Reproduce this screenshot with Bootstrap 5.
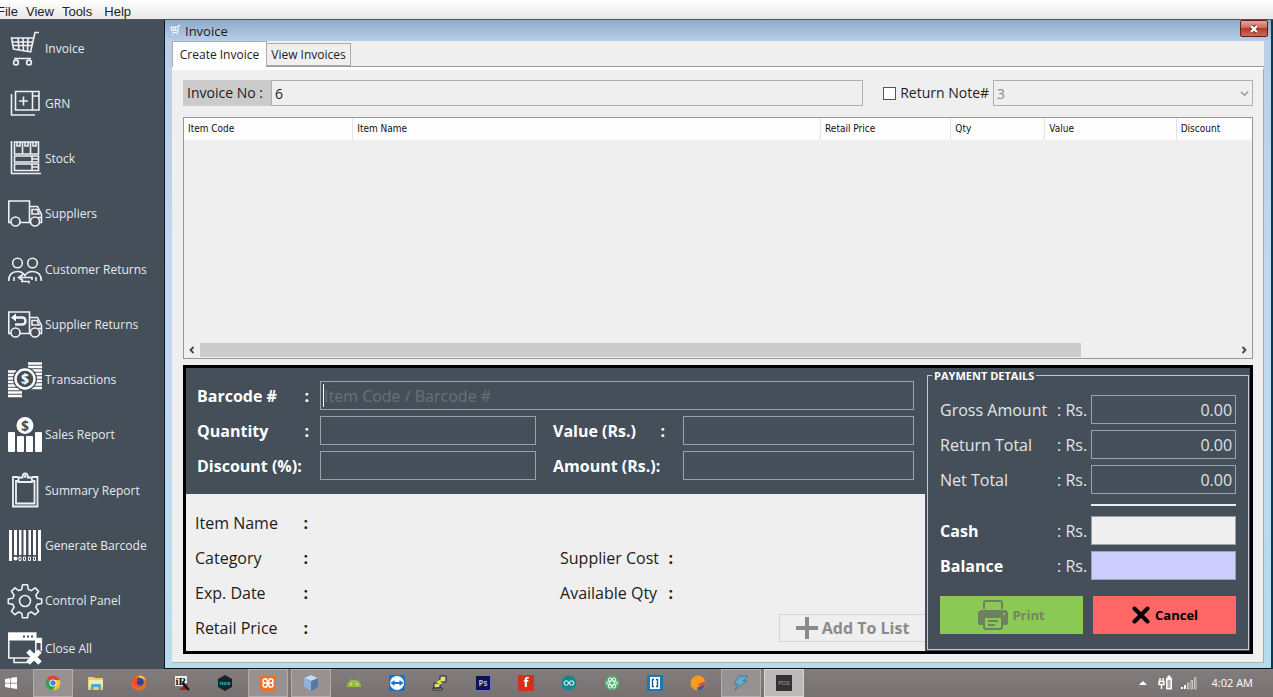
<!DOCTYPE html>
<html lang="en">
<head>
<meta charset="utf-8">
<meta name="viewport" content="width=device-width, initial-scale=1">
<title>Invoice</title>
<link href="https://cdn.jsdelivr.net/npm/bootstrap@5.3.0/dist/css/bootstrap.min.css" rel="stylesheet">
<style>
:root{--slate:#444f5a;--panel:#efefef;--line:#9aa2aa}
body{font-family:"Open Sans","Noto Sans",sans-serif;font-size:16px;line-height:20px;color:#1c1c1c;background:var(--slate)}
button,input,select{font-family:inherit}
.menubar{height:20px;background:linear-gradient(#fff,#e8e8e8);border-bottom:1px solid #4a5560;overflow:hidden}
.menubar ul{margin-left:-3px;gap:8px}
.menubar button{font:13px/19px "Liberation Sans",sans-serif;color:#222;background:none;border:0;padding:0}
.sidebar{width:165px;flex:none;border-right:1px solid #0d1922;padding-top:1px}
.sidebar li{flex:1 1 0;min-height:38px}
.sidebar li:last-child{flex:0 0 40px}
.sidebar a{color:#e6eaee;font-size:12px;padding-left:8px;gap:3px;height:100%;text-decoration:none;white-space:nowrap}
.sidebar svg{width:34px;height:34px;overflow:visible;fill:none;stroke:#eef1f4;stroke-width:1.6;flex:none}
.sidebar .solid{fill:#fff;stroke:none}
.frame{background:linear-gradient(#b9cfe8,#c4d8ef 280px,#b5dcec);padding:0 7px 5px;border-right:2px solid #0b3a52;border-bottom:1px solid #06141c}
.titlebar{height:21px;margin:0 -7px;padding:0 3px 0 5px;gap:4px;background:linear-gradient(#8fabc9,#b7cde8);font-size:13px}
.closer{width:28px;height:17px;border:1px solid #5d1f1f;border-radius:2px;background:linear-gradient(#e2a79c,#cf6a5b 45%,#b53a2b 50%,#d0685c);padding:0}
.client{background:var(--panel)}
.tabstrip{border-bottom:1px solid #9b9b9b;height:26px}
.tabstrip button{border:1px solid #acacac;font-size:12px;line-height:20px;color:#222;padding:0 4px;background:var(--panel);white-space:nowrap}
.tabstrip .on{width:95px;height:27px;background:#fff;border-bottom:0}
.tabstrip .off{width:84px;height:23px;border-left:0}
.page{border-right:1px solid #a8a8a8;border-bottom:1px solid #b5b5b5;border-top:3px solid #fff;padding:10px 10px 8px 11px}
.headrow{height:26px}
.headrow label{font-size:14px}
.tag{background:#cbcbcb;width:88px;padding-left:4px;line-height:26px}
.field{height:26px;border:1px solid #b0b0b0;border-radius:0;background:var(--panel);padding:0 3px;font-size:14px;color:#222}
.form-check-input.tick{width:13px;height:13px;border-radius:0;border:1px solid #555;margin:0 4px 0 20px}
.field.pick{width:260px;color:#888;background:var(--panel) url("data:image/svg+xml,%3Csvg xmlns='http://www.w3.org/2000/svg' viewBox='0 0 10 10'%3E%3Cpath d='M1 3l4 4 4-4' fill='none' stroke='%23999' stroke-width='1.5'/%3E%3C/svg%3E") no-repeat right 3px center/9px}
.gridbox{border:1px solid #979797;margin-top:11px;flex:1 1 auto;min-height:120px}
.gridbox table{table-layout:fixed;font:10px/22px "DejaVu Sans Condensed","DejaVu Sans",sans-serif;color:#111;margin:0}
.gridbox th{font-weight:400;background:#fdfdfd;border-right:1px solid #e3e3e3;padding:0 4px;white-space:nowrap}
.gridbox th:last-child{border-right:0}
.hbar{height:16px}
.hbar button{width:16px;border:0;background:none;padding:0;line-height:0}
.thumb{width:85%;background:#cbcbcb;height:14px;align-self:center}
.entry{border:3px solid #000;margin-top:6px;flex:none;height:289px}
.dark{background:var(--slate);color:#fff;height:126px;padding:13px 11px 0}
.formgrid{display:grid;grid-template-columns:123px minmax(0,216fr) 147px minmax(0,231fr);row-gap:6px;align-items:center}
.formgrid label{font-weight:700;display:flex;justify-content:space-between;width:112px;white-space:nowrap}
.formgrid .second{margin-left:17px}
.slot{height:29px;border:1px solid var(--line);border-radius:0;background:transparent;color:#dfe2e5;padding:0 3px;font-size:16px;width:100%}
.slot::placeholder{color:#6d7176;opacity:1}
.caret{position:relative;grid-column:2/5;height:29px;display:flex}
.caret::before{content:"";position:absolute;left:3px;top:3px;bottom:3px;width:1px;background:#fff}
.info{background:var(--panel);display:grid;grid-template-columns:minmax(0,365fr) minmax(0,365fr);grid-auto-rows:35px;align-items:center;padding:11px 0 0 9px}
.info dl{display:flex;justify-content:space-between;width:113px;margin:0;white-space:nowrap}
.info dt{font-weight:400}
.info dd{font-weight:700;margin:0}
.addbtn{width:146px;height:28px;border:1px solid #d6d6d6;border-right:0;background:var(--panel);color:#8b8b8b;font-weight:700;font-size:16px;padding:0;gap:4px}
.paybox{width:325px;flex:none;background:var(--slate);padding:0 1px 1px 2px}
.paybox fieldset{border:1px solid #c3c9ce;height:100%;padding:12px 12px 0;color:#e3e6e9}
.paybox legend{float:none;width:auto;font-size:11px;line-height:15px;font-weight:700;color:#fff;padding:0 2px;margin:0 0 0 -8px}
.payrow{display:grid;grid-template-columns:117px 34px minmax(0,1fr);height:29px;align-items:center;margin-bottom:6px;white-space:nowrap}
.payrow .slot{text-align:right}
.payline{margin:10px 0 10px 151px;border-top:2px solid #e9ecee;opacity:1}
.action{height:38px;border:0;border-radius:0;font-weight:700;font-size:13px;color:#000;padding:0;gap:4px;flex:1 1 0}
.taskbar{height:28px;background:linear-gradient(#827c7c,#777171);flex:none}
.taskbar button{width:40px;height:28px;border:1px solid transparent;background:none;padding:0;line-height:0;flex:none}
.taskbar .home{width:22px;margin-right:11px}
.taskbar .open{background:#979191;border-color:#b3adad}
.taskbar .front{background:#bdb9b9;border-color:#d9d6d6}
.taskbar svg{width:16px;height:16px}
.tray{color:#fff;font-size:11px;line-height:28px;padding-right:20px;gap:7px}
</style>
</head>
<body class="d-flex flex-column min-vh-100">
<header class="menubar flex-shrink-0">
 <ul class="list-unstyled d-flex mb-0">
  <li><button>File</button></li><li><button>View</button></li><li><button>Tools</button></li><li class="ms-1"><button>Help</button></li>
 </ul>
</header>
<div class="d-flex flex-grow-1">
<nav class="sidebar d-flex">
 <ul class="list-unstyled d-flex flex-column mb-0 w-100">
  <li><a href="#" class="d-flex align-items-center"><svg viewBox="0 0 34 34"><path d="M31 .5h-4L22.500 20M6 26.500h17M25 6H3.500L5.500 17l18 3M4 10h20M4.500 13.500h19M10 6l1 12M15 6l.5 13M20 6l-.5 13"/><circle cx="8" cy="30.500" r="2.400"/><circle cx="21" cy="30.500" r="2.400"/></svg>Invoice</a></li>
  <li><a href="#" class="d-flex align-items-center"><svg viewBox="0 0 34 34"><path d="M7.500 4.500H31V23H7.500zM24.500 4.500V23M24.500 9H31M11 14h9M15.500 9.500v9M3.500 7v21H27"/></svg>GRN</a></li>
  <li><a href="#" class="d-flex align-items-center"><svg viewBox="0 0 34 34"><path d="M3.500-1v32.500H33M6.500 0h24v12h-24zM14.500 0v12M22.500 0v12M9 0v4h3V0M17 0v4h3V0M25 0v4h3V0M6.500 14h24v6h-24zM6.500 22h24v6.500h-24zM24 14v6M24 22v6M24 17h6M24 25h6"/></svg>Stock</a></li>
  <li><a href="#" class="d-flex align-items-center"><svg viewBox="0 0 34 34"><path d="M3 25.500H.8V4H21.500v21.500H12M21.500 9.500h8l4 8v8H31.500M22 25.500h1M24 17v-4.500h5l2 4.500zM30 20.500h3"/><circle cx="7.500" cy="24.500" r="4.500"/><circle cx="27" cy="24.500" r="4.500"/></svg>Suppliers</a></li>
  <li><a href="#" class="d-flex align-items-center"><svg viewBox="0 0 34 34"><circle cx="9.500" cy="10" r="4.800"/><circle cx="24.500" cy="10" r="4.800"/><path d="M.7 28c0-7 4-9.500 9-9.500 4 0 6 2 7.300 4 1.300-2 3.300-4 7.300-4 5 0 9 2.500 9 9.500M6 28v-4M28 28v-4M15 21.500l-4.500 3 4.500 3M11 24.500h13v2.500M13 28.500h8v2"/></svg>Customer Returns</a></li>
  <li><a href="#" class="d-flex align-items-center"><svg viewBox="0 0 34 34"><path d="M3 25.500H.8V4H21.500v21.500H12M21.500 9.500h8l4 8v8H31.500M22 25.500h1M24 17v-4.500h5l2 4.500zM30 20.500h3"/><path stroke-width="2.400" d="M6 9.500h8q3.500 0 3.500 3.500t-3.500 3.500H7"/><path class="solid" d="M3 9.500l5-4v8z"/><circle cx="7.500" cy="24.500" r="4.500"/><circle cx="27" cy="24.500" r="4.500"/></svg>Supplier Returns</a></li>
  <li><a href="#" class="d-flex align-items-center"><svg viewBox="0 0 34 34"><path stroke-width="2.600" stroke="#fff" d="M0 8.500h8M0 12h8M0 15.500h8M0 19h8M0 22.500h9M0 26h14M0 29.500h14M0 33h14M20 .5h14M20 4h14M24 7.500h10M26 11h8M26 14.500h8M26 18h8M25 21.500h9M22 25h12"/><circle cx="17" cy="16" r="12" fill="#444f5a" stroke="none"/><circle cx="17" cy="16" r="9.500" fill="#444f5a" stroke="#fff" stroke-width="2.400"/><text x="17" y="21" text-anchor="middle" font-size="14" font-weight="700" fill="#fff" stroke="none">$</text></svg>Transactions</a></li>
  <li><a href="#" class="d-flex align-items-center"><svg viewBox="0 0 34 34"><g class="solid"><circle cx="17" cy="7.500" r="8.500"/><rect y="14" width="7" height="20" rx="1"/><rect x="9" y="18" width="7" height="16" rx="1"/><rect x="18" y="18" width="7" height="16" rx="1"/><rect x="27" y="14" width="7" height="20" rx="1"/></g><text x="17" y="12.500" text-anchor="middle" font-size="14" font-weight="700" fill="#444f5a" stroke="none">$</text></svg>Sales Report</a></li>
  <li><a href="#" class="d-flex align-items-center"><svg viewBox="0 0 34 34"><path stroke-width="1.800" d="M10 3H5v29.500h24.500V3h-5M10.500 7H8v22.500h18.500V7H24M10.500 8V3.500h4q0-4 2.700-4t2.700 4h4V8z"/><circle cx="17.200" cy="2.500" r=".6"/></svg>Summary Report</a></li>
  <li><a href="#" class="d-flex align-items-center"><svg viewBox="0 0 34 34"><g class="solid"><path d="M1 1h3v31H1zM30 1h3v31h-3zM6 1h3v25H6zM11 1h2.500v25H11zM15.500 1H18v25h-2.500zM20.500 1H23v25h-2.500zM25 1h3v25h-3z"/><circle cx="7.500" cy="29.500" r="2"/></g><path stroke-width="1" d="M11 28h2v3.500h-2zM15.500 28h2v3.500h-2zM20.500 28h2v3.500h-2zM25.500 28h2v3.500h-2z"/></svg>Generate Barcode</a></li>
  <li><a href="#" class="d-flex align-items-center"><svg viewBox="0 0 34 34"><circle cx="17" cy="17" r="5.500"/><path stroke-linejoin="round" d="M14.500.8h5l.8 4.600 3 1.200 3.800-2.700 3.500 3.500-2.700 3.800 1.200 3 4.600.8v4.500l-4.600.9-1.200 3 2.700 3.800-3.500 3.500-3.800-2.700-3 1.200-.8 4.600h-5l-.8-4.600-3-1.200-3.800 2.700-3.500-3.500 2.700-3.800-1.200-3-4.600-.9V15l4.600-.8 1.200-3-2.700-3.800 3.500-3.500 3.800 2.700 3-1.200z"/></svg>Control Panel</a></li>
  <li><a href="#" class="d-flex align-items-center"><svg viewBox="0 0 34 34"><path d="M.8 1h27v25H.8zM28 6.500h5.300V19M6 26v4.500h14"/><path class="solid" d="M.5 1h27v7.500H.5zM28 7h5v4h-5z"/><path stroke="#444f5a" stroke-width="2" stroke-dasharray="2 2" d="M15 4.500h10"/><path stroke="#fff" stroke-width="5" d="M20 19l12 12M32 19L20 31"/></svg>Close All</a></li>
 </ul>
</nav>
<main class="frame d-flex flex-column flex-grow-1">
 <div class="titlebar d-flex align-items-center flex-shrink-0">
  <svg width="11" height="11" viewBox="0 0 11 11" fill="none" stroke="#f1f6fb" stroke-width="1.200"><path d="M10.500.5h-2l-1 7H2M8 2H1l.5 3.500H7.500M3.500 2v3.500M5.500 2v3.500"/><path d="M2 9.500h1.500M6.500 9.500H8"/></svg>
  <span class="me-auto">Invoice</span>
  <button class="closer d-flex align-items-center justify-content-center align-self-start" aria-label="Close window"><svg width="12" height="10" viewBox="0 0 12 10"><path d="M3 2l6 6M9 2L3 8" stroke="#6b2b2b" stroke-width="4"/><path d="M3 2l6 6M9 2L3 8" stroke="#fff" stroke-width="2.400"/></svg></button>
 </div>
 <div class="client d-flex flex-column flex-grow-1">
  <div class="tabstrip d-flex align-items-end flex-shrink-0">
   <button class="on align-self-start">Create Invoice</button><button class="off">View Invoices</button>
  </div>
  <div class="page d-flex flex-column flex-grow-1">
   <div class="headrow d-flex align-items-center flex-shrink-0">
    <label class="tag flex-shrink-0" for="no">Invoice No :</label>
    <input id="no" class="field flex-grow-1" value="6">
    <input type="checkbox" id="ret" class="form-check-input tick flex-shrink-0">
    <label for="ret" class="text-nowrap me-1">Return Note#</label>
    <select class="form-select field pick" aria-label="Return note number" disabled><option>3</option></select>
   </div>
   <div class="gridbox d-flex flex-column">
    <table class="w-100">
     <colgroup><col style="width:15.8%"><col style="width:43.8%"><col style="width:12.2%"><col style="width:8.8%"><col style="width:12.3%"><col></colgroup>
     <thead><tr><th>Item Code</th><th>Item Name</th><th>Retail Price</th><th>Qty</th><th>Value</th><th>Discount</th></tr></thead>
    </table>
    <div class="hbar d-flex mt-auto">
     <button aria-label="Scroll left"><svg width="8" height="8" viewBox="0 0 8 8"><path d="M5.500 1l-3 3 3 3" fill="none" stroke="#444" stroke-width="1.800"/></svg></button>
     <div class="flex-grow-1 d-flex"><div class="thumb"></div></div>
     <button aria-label="Scroll right"><svg width="8" height="8" viewBox="0 0 8 8"><path d="M2.500 1l3 3-3 3" fill="none" stroke="#444" stroke-width="1.800"/></svg></button>
    </div>
   </div>
   <div class="entry d-flex">
    <div class="flex-grow-1 d-flex flex-column">
     <div class="dark flex-shrink-0">
      <div class="formgrid">
       <label for="bar"><span>Barcode #</span><span>:</span></label><div class="caret"><input id="bar" class="slot" placeholder="Item Code / Barcode #"></div>
       <label for="qty"><span>Quantity</span><span>:</span></label><input id="qty" class="slot">
       <label for="val" class="second"><span>Value (Rs.)</span><span>:</span></label><input id="val" class="slot">
       <label for="dis" class="justify-content-start"><span>Discount (%)</span><span>:</span></label><input id="dis" class="slot">
       <label for="amt" class="second justify-content-start"><span>Amount (Rs.)</span><span>:</span></label><input id="amt" class="slot">
      </div>
     </div>
     <div class="info flex-grow-1">
      <dl><dt>Item Name</dt><dd>:</dd></dl><span></span>
      <dl><dt>Category</dt><dd>:</dd></dl><dl><dt>Supplier Cost</dt><dd>:</dd></dl>
      <dl><dt>Exp. Date</dt><dd>:</dd></dl><dl><dt>Available Qty</dt><dd>:</dd></dl>
      <dl><dt>Retail Price</dt><dd>:</dd></dl>
      <button class="addbtn d-flex align-items-center justify-content-center ms-auto" disabled><svg width="22" height="22" viewBox="0 0 22 22"><path d="M11 0v22M0 11h22" stroke="#8b8b8b" stroke-width="4"/></svg>Add To List</button>
     </div>
    </div>
    <div class="paybox">
     <fieldset>
      <legend>PAYMENT DETAILS</legend>
      <div class="payrow"><label for="gross">Gross Amount</label><span>: Rs.</span><input id="gross" class="slot" value="0.00"></div>
      <div class="payrow"><label for="rett">Return Total</label><span>: Rs.</span><input id="rett" class="slot" value="0.00"></div>
      <div class="payrow mb-0"><label for="net">Net Total</label><span>: Rs.</span><input id="net" class="slot" value="0.00"></div>
      <hr class="payline">
      <div class="payrow"><label for="cash" class="fw-bold text-white">Cash</label><span>: Rs.</span><input id="cash" class="slot" style="background:#efefef"></div>
      <div class="payrow mb-3"><label for="bal" class="fw-bold text-white">Balance</label><span>: Rs.</span><input id="bal" class="slot" style="background:#ccccff"></div>
      <div class="d-flex" style="gap:10px">
       <button class="action d-flex align-items-center justify-content-center" style="background:#8cc954;color:#71875f" disabled><svg width="30" height="30" viewBox="0 0 30 30"><path d="M6 9V3q0-2 2-2h14q2 0 2 2v6" fill="none" stroke="#6f8062" stroke-width="2"/><path d="M4 10h22q4 0 4 4v9q0 2-3 2H3q-3 0-3-2v-9q0-4 4-4z" fill="#6f8062"/><path d="M6 17h18v10q0 2-2 2H8q-2 0-2-2z" fill="#8cc954" stroke="#6f8062" stroke-width="2"/><path d="M10 21h10M10 25h7" stroke="#6f8062" stroke-width="2"/><circle cx="26" cy="14" r="1.200" fill="#8cc954"/></svg>Print</button>
       <button class="action d-flex align-items-center justify-content-center" style="background:#ff6666"><svg width="20" height="18" viewBox="0 0 20 18"><path d="M3.500 2.500l13 13M16.500 2.500l-13 13" stroke="#000" stroke-width="4" stroke-linecap="round"/></svg>Cancel</button>
      </div>
     </fieldset>
    </div>
   </div>
  </div>
 </div>
</main>
</div>
<footer class="taskbar d-flex align-items-center">
 <button class="home" aria-label="Start"><svg style="width:12px" viewBox="0 0 12 12"><path fill="#fff" d="M0 2l5-.8v4.500H0zM5.700 1L12 0v5.700H5.700zM0 6.400h5v4.500L0 10zM5.700 6.400H12V12l-6.300-1z"/></svg></button>
 <div class="d-flex me-auto" style="gap:3px">
  <button class="open" aria-label="Chrome"><svg viewBox="0 0 16 16"><circle cx="8" cy="8" r="7.500" fill="#f2c230"/><path d="M8 8L1.500 4.200A7.500 7.500 0 0 1 14.800 5H8z" fill="#dc4436"/><path d="M8 8L1.500 4.200A7.500 7.500 0 0 0 7.500 15.500L11 9.500z" fill="#2fa057"/><circle cx="8" cy="8" r="3.600" fill="#fff"/><circle cx="8" cy="8" r="2.700" fill="#4585e8"/></svg></button>
  <button aria-label="Explorer"><svg viewBox="0 0 16 16"><path d="M0 2h6l1 1h8v12H0z" fill="#e9cf72"/><path d="M1 5h14v7H1z" fill="#f7e9ac"/><path d="M3 15v-5q0-1 1-1h8q1 0 1 1v5h-2.500v-3h-5v3z" fill="#4fa8d5"/></svg></button>
  <button aria-label="Firefox"><svg viewBox="0 0 16 16"><circle cx="8" cy="8" r="7.500" fill="#ef6a22"/><path d="M8 .5a7.500 7.500 0 0 1 7 5q-3-3-7-1z" fill="#ffcc35"/><circle cx="8.500" cy="7" r="4.200" fill="#27489c"/><path d="M1 5q1-3 3-4 0 3 4 4-3 1-2 4 2 2 5 1-2 4-6 2-4-2-4-7z" fill="#e8502a"/></svg></button>
  <button aria-label="iReport"><svg viewBox="0 0 16 16"><path d="M1 1h12v10H1z" fill="#eee"/><text x="1.500" y="10" font-size="11" font-weight="700" font-family="Liberation Serif,serif" fill="#111">iR</text><path d="M5 15L13 8l2 7z" fill="#9d2525"/><path d="M8 8l7 7" stroke="#111" stroke-width="2"/></svg></button>
  <button aria-label="Nox"><svg viewBox="0 0 16 16"><path d="M8 0l7 4v8l-7 4-7-4V4z" fill="#18242b"/><text x="8" y="10" text-anchor="middle" font-size="6" font-weight="700" fill="#27b7c6">nox</text></svg></button>
  <button class="open" aria-label="XAMPP"><svg viewBox="0 0 16 16"><rect width="16" height="16" rx="2" fill="#e8742b"/><path d="M5 4h1.500L9.500 12H11M11 4H9.500L6.500 12H5M5 4a2 2 0 0 0 0 4h6a2 2 0 0 0 0-4M5 8a2 2 0 0 0 0 4M11 8a2 2 0 0 1 0 4" fill="none" stroke="#fff" stroke-width="1.500"/></svg></button>
  <button class="open" aria-label="VirtualBox"><svg viewBox="0 0 16 16"><path d="M8 0l7 3v9l-7 4-7-4V3z" fill="#5777a5"/><path d="M8 0l7 3-7 3-7-3z" fill="#c7d9ec"/><path d="M1 3l7 3v10l-7-4z" fill="#91b2d8"/></svg></button>
  <button aria-label="Android"><svg viewBox="0 0 16 16"><path d="M1 12q0-7 7-7t7 7z" fill="#9bbc3f"/><path d="M4 4l2 3M12 4l-2 3" stroke="#9bbc3f"/><circle cx="5" cy="9" r=".8" fill="#fff"/><circle cx="11" cy="9" r=".8" fill="#fff"/></svg></button>
  <button aria-label="TeamViewer"><svg viewBox="0 0 16 16"><rect width="16" height="16" rx="1" fill="#1774c9"/><circle cx="8" cy="8" r="7" fill="#fff"/><path d="M1.500 8l4-3v2h5V5l4 3-4 3V9h-5v2z" fill="#1774c9"/></svg></button>
  <button aria-label="PuTTY"><svg viewBox="0 0 16 16"><g fill="#ccc" stroke="#222"><path d="M8 1h6v6H8zM2 8h6v5H2zM1 13h9v2H1z"/></g><path d="M13 3L6 7l3 1-6 4" fill="none" stroke="#f5e83a" stroke-width="1.500"/></svg></button>
  <button aria-label="Photoshop"><svg viewBox="0 0 16 16"><rect x=".5" y=".5" width="15" height="15" fill="#0e1350" stroke="#6377c5"/><text x="8" y="11" text-anchor="middle" font-size="8" font-weight="700" fill="#a9bdf5">Ps</text></svg></button>
  <button aria-label="FlashBuilder"><svg viewBox="0 0 16 16"><rect width="16" height="16" fill="#d4301f"/><text x="8" y="12" text-anchor="middle" font-size="12" font-weight="700" fill="#fff">f</text></svg></button>
  <button aria-label="Arduino"><svg viewBox="0 0 16 16"><circle cx="8" cy="8" r="7.500" fill="#14898f"/><circle cx="5.300" cy="8" r="2.200" fill="none" stroke="#fff"/><circle cx="10.700" cy="8" r="2.200" fill="none" stroke="#fff"/></svg></button>
  <button aria-label="Atom"><svg viewBox="0 0 16 16"><circle cx="8" cy="8" r="7.500" fill="#53ab74"/><g fill="none" stroke="#e5f7eb"><ellipse cx="8" cy="8" rx="5.500" ry="2.200"/><ellipse cx="8" cy="8" rx="5.500" ry="2.200" transform="rotate(60 8 8)"/><ellipse cx="8" cy="8" rx="5.500" ry="2.200" transform="rotate(120 8 8)"/></g></svg></button>
  <button aria-label="Brackets"><svg viewBox="0 0 16 16"><rect width="16" height="16" fill="#1d78b8"/><path d="M3 2h10v12H3z" fill="#fff"/><path d="M7 4.500H5.500v7H7M9 4.500h1.500v7H9" fill="none" stroke="#1b5986" stroke-width="1.400"/></svg></button>
  <button aria-label="Nightly"><svg viewBox="0 0 16 16"><circle cx="8" cy="8" r="7.500" fill="#f69b22"/><path d="M15 9q-1 6-7 6.500-2-3 1-4 3 0 3-3z" fill="#3b59a8"/><path d="M8 9q4-1 7-3v3q-3 1-4 3z" fill="#dc5138"/></svg></button>
  <button class="open" aria-label="Winamp"><svg viewBox="0 0 16 16"><path d="M6 1h9l-5 5h4L2 15l3-6H1z" fill="#62aec9" stroke="#2d6f8d" stroke-width=".7"/></svg></button>
  <button class="front" aria-label="POS"><svg viewBox="0 0 16 16"><rect width="16" height="16" fill="#323232"/><text x="8" y="10" text-anchor="middle" font-size="6" fill="#aaa">POS</text></svg></button>
 </div>
 <div class="tray d-flex align-items-center">
  <svg style="width:8px" viewBox="0 0 8 8"><path d="M0 6l4-4 4 4z" fill="#fff"/></svg>
  <svg class="ms-1" viewBox="0 0 16 16"><path d="M8.500 3h5v11h-5zM10 1h2v2h-2z" fill="#fff" stroke="#fff"/><path d="M9.500 5h3v8h-3z" fill="#aaa"/><path d="M2 3v3M5 3v3M1 6.500h5v3H1zM3.500 9v5" fill="none" stroke="#fff" stroke-width="1.500"/></svg>
  <svg viewBox="0 0 16 16"><path d="M1 14v-2M4 14v-4" stroke="#fff" stroke-width="2"/><path d="M6.500 14V8h1.500v6zM10 14V5.500h1.500V14zM13.500 14V2.500H15V14z" fill="none" stroke="#ccc"/></svg>
  <span class="ms-2">4:02 AM</span>
 </div>
</footer>
<script src="https://cdn.jsdelivr.net/npm/bootstrap@5.3.0/dist/js/bootstrap.bundle.min.js"></script>
</body>
</html>
